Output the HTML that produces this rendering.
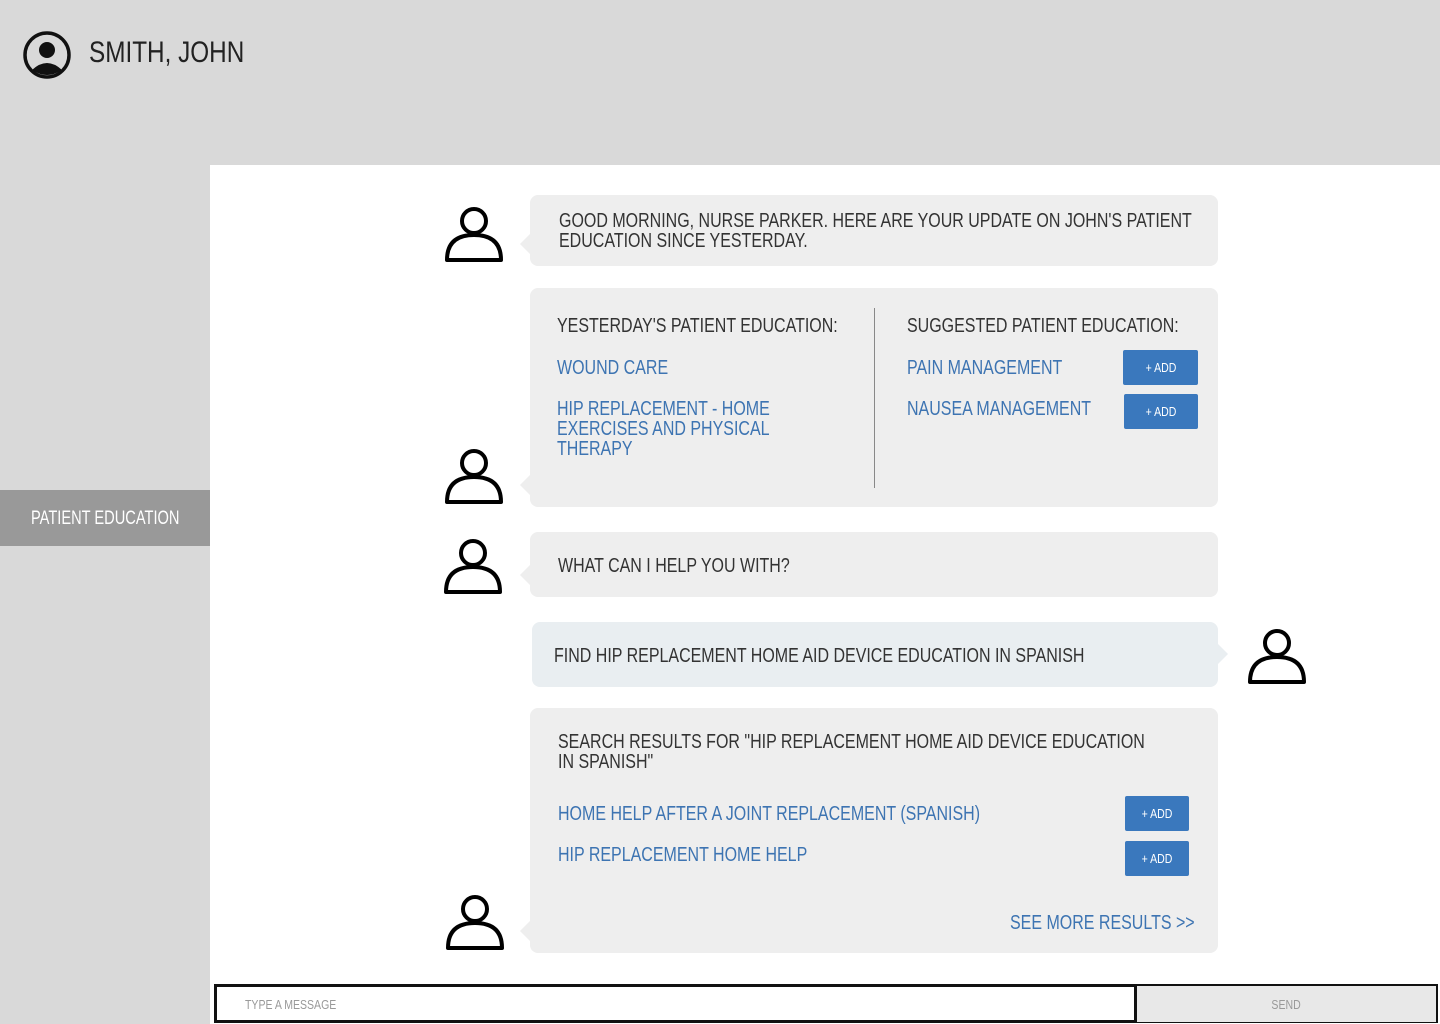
<!DOCTYPE html>
<html><head><meta charset="utf-8"><style>
*{margin:0;padding:0;box-sizing:border-box}
body{width:1440px;height:1024px;position:relative;background:#d9d9d9;font-family:"Liberation Sans",sans-serif;color:#333;overflow:hidden;text-transform:uppercase}
.abs{position:absolute}
.n{white-space:nowrap;transform:scaleX(.81);transform-origin:0 0}
.main{left:210px;top:165px;width:1230px;height:859px;background:#fff}
.bub{background:#eeeeee;border-radius:8px;left:530px;width:688px}
.bub:before{content:"";position:absolute;left:-10px;bottom:12px;border:10px solid transparent;border-right-color:#eeeeee;border-left:0}
.t{font-size:20px;line-height:20px;white-space:nowrap;transform:scaleX(.8);transform-origin:0 0}
.l{color:#3d74b2}
.btn{background:#3a78bd;color:#fff;font-size:13px;display:flex;align-items:center;justify-content:center;border-radius:2px}
svg.av{position:absolute;width:60px;height:58px}
</style></head><body>
<svg class="abs" style="left:22px;top:30px" width="50" height="50" viewBox="0 0 50 50"><circle cx="25" cy="25" r="22" fill="none" stroke="#111" stroke-width="3.5"/><circle cx="25" cy="20" r="8" fill="#111"/><path d="M10 40 Q25 26 40 40 Q25 50 10 40Z" fill="#111"/></svg>
<div class="abs n" style="left:89px;top:36px;font-size:30px;color:#222">SMITH, JOHN</div>
<div class="abs main"></div>
<div class="abs" style="left:0;top:490px;width:210px;height:56px;background:#999"><div class="abs n" style="left:31px;top:18px;color:#fff;font-size:19px;transform:scaleX(.77)">PATIENT EDUCATION</div></div>

<svg style="display:none"><symbol id="p" viewBox="0 0 60 58"><circle cx="30" cy="16" r="12" fill="none" stroke="#000" stroke-width="4"/><path d="M3 55 Q3 30 30 30 Q57 30 57 55Z" fill="none" stroke="#000" stroke-width="4" stroke-linejoin="round"/></symbol></svg>
<svg class="av" style="left:444px;top:205px"><use href="#p"/></svg>
<svg class="av" style="left:444px;top:447px"><use href="#p"/></svg>
<svg class="av" style="left:443px;top:537px"><use href="#p"/></svg>
<svg class="av" style="left:1247px;top:627px"><use href="#p"/></svg>
<svg class="av" style="left:445px;top:893px"><use href="#p"/></svg>

<div class="abs bub" style="top:195px;height:71px"><div class="abs t" style="left:29px;top:16px">GOOD MORNING, NURSE PARKER. HERE ARE YOUR UPDATE ON JOHN'S PATIENT<br>EDUCATION SINCE YESTERDAY.</div></div>

<div class="abs bub" style="top:288px;height:219px">
<div class="abs t" style="left:27px;top:28px">YESTERDAY'S PATIENT EDUCATION:</div>
<div class="abs t l" style="left:27px;top:70px">WOUND CARE</div>
<div class="abs t l" style="left:27px;top:111px">HIP REPLACEMENT - HOME<br>EXERCISES AND PHYSICAL<br>THERAPY</div>
<div class="abs" style="left:344px;top:20px;width:1px;height:180px;background:#888"></div>
<div class="abs t" style="left:377px;top:28px">SUGGESTED PATIENT EDUCATION:</div>
<div class="abs t l" style="left:377px;top:70px">PAIN MANAGEMENT</div>
<div class="abs t l" style="left:377px;top:111px">NAUSEA MANAGEMENT</div>
<div class="abs btn" style="left:593px;top:62px;width:75px;height:35px"><span class="n" style="transform-origin:50% 0">+ ADD</span></div>
<div class="abs btn" style="left:594px;top:106px;width:74px;height:35px"><span class="n" style="transform-origin:50% 0">+ ADD</span></div>
</div>

<div class="abs bub" style="top:532px;height:65px"><div class="abs t" style="left:28px;top:24px">WHAT CAN I HELP YOU WITH?</div></div>

<div class="abs" style="left:532px;top:622px;width:686px;height:65px;background:#e9eef1;border-radius:8px"><div class="abs" style="right:-10px;top:22px;border:10px solid transparent;border-left-color:#e9eef1;border-right:0"></div><div class="abs t" style="left:22px;top:24px">FIND HIP REPLACEMENT HOME AID DEVICE EDUCATION IN SPANISH</div></div>

<div class="abs bub" style="top:708px;height:245px">
<div class="abs t" style="left:28px;top:24px">SEARCH RESULTS FOR "HIP REPLACEMENT HOME AID DEVICE EDUCATION<br>IN SPANISH"</div>
<div class="abs t l" style="left:28px;top:96px">HOME HELP AFTER A JOINT REPLACEMENT (SPANISH)</div>
<div class="abs t l" style="left:28px;top:137px">HIP REPLACEMENT HOME HELP</div>
<div class="abs btn" style="left:595px;top:88px;width:64px;height:35px"><span class="n" style="transform-origin:50% 0">+ ADD</span></div>
<div class="abs btn" style="left:595px;top:133px;width:64px;height:35px"><span class="n" style="transform-origin:50% 0">+ ADD</span></div>
<div class="abs t l" style="left:480px;top:205px">SEE MORE RESULTS &gt;&gt;</div>
</div>

<div class="abs" style="left:214px;top:984px;width:1224px;height:39px;border:3px solid #111;background:#fff">
<div class="abs n" style="left:28px;top:10px;font-size:13px;color:#999">TYPE A MESSAGE</div>
<div class="abs" style="left:917px;top:-1px;width:302px;height:36px;background:#e8e8e8;border-left:3px solid #111;text-align:center;font-size:13px;color:#999;padding-top:11px"><span class="n" style="display:inline-block;transform-origin:50% 0">SEND</span></div>
</div>
</body></html>
